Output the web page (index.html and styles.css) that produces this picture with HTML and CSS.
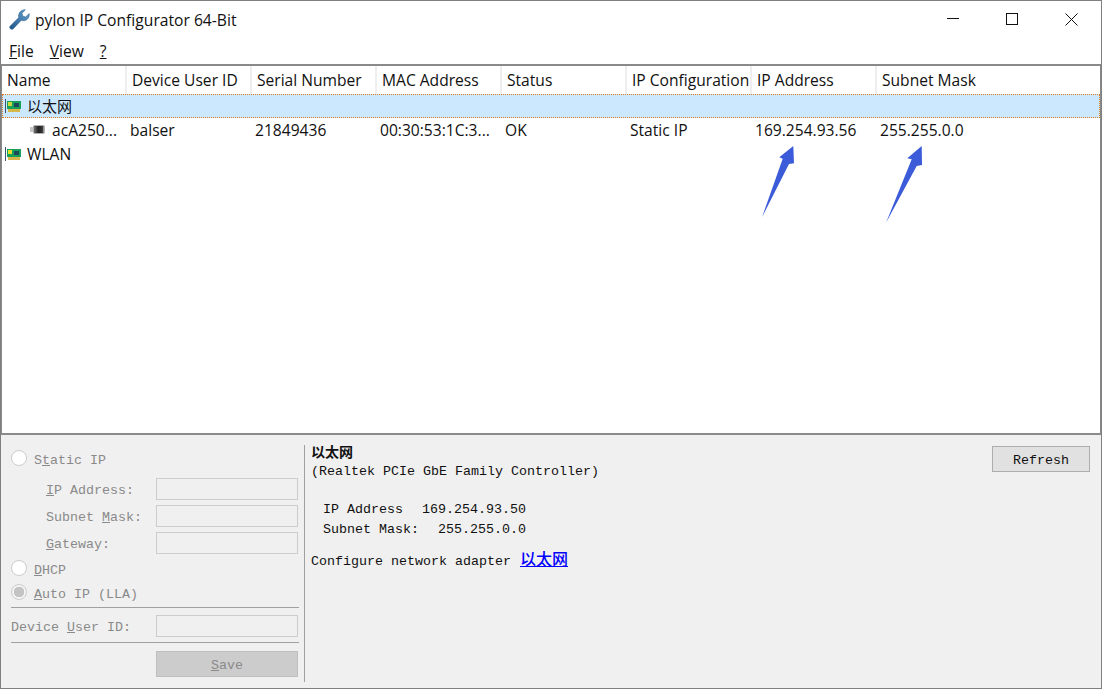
FILE: index.html
```html
<!DOCTYPE html>
<html lang="en">
<head>
<meta charset="utf-8">
<title>pylon IP Configurator 64-Bit</title>
<link rel="stylesheet" href="styles.css">
</head>
<body>
<div class="window">
  <header class="titlebar">
    <svg class="app-icon" viewBox="0 0 21 21" width="21" height="21"><defs><linearGradient id="wr" x1="0" y1="1" x2="1" y2="0"><stop offset="0" stop-color="#1f5488"/><stop offset="1" stop-color="#6aa3d0"/></linearGradient></defs><path d="M.8 17.500 9.800 8.600C8.800 4.800 11.500 .6 16.300 .8L13 4.300 13.800 7.200 16.700 8 20.200 4.600C20.700 9.800 16.300 13 12.300 11.300L4 20C2.300 21 .1 19.300 .8 17.500Z" fill="url(#wr)" stroke="#2a5f90" stroke-width=".6"/></svg>
    <span class="title">pylon IP Configurator 64-Bit</span>
    <div class="winbtns">
      <svg class="winbtn" width="46" height="13" viewBox="0 0 46 13"><path d="M17 5.500h12" stroke="#111" fill="none"/></svg>
      <svg class="winbtn" width="46" height="13" viewBox="0 0 46 13"><rect x="17.500" y=".5" width="11" height="11" stroke="#111" fill="none"/></svg>
      <svg class="winbtn" width="46" height="13" viewBox="0 0 46 13"><path d="M17.500 .5l12 12M29.500 .5l-12 12" stroke="#111" fill="none"/></svg>
    </div>
  </header>
  <nav class="menubar">
    <span><u>F</u>ile</span><span><u>V</u>iew</span><span><u>?</u></span>
  </nav>
  <section class="list">
    <div class="row head">
      <div>Name</div><div>Device User ID</div><div>Serial Number</div><div>MAC Address</div><div>Status</div><div>IP Configuration</div><div>IP Address</div><div>Subnet Mask</div>
    </div>
    <div class="row adapter selected">
      <div class="name">
        <svg class="nic" width="16" height="14" viewBox="0 0 16 14"><path d="M.5 0v14" stroke="#3a5670"/><rect x="2" y="2" width="14" height="8" fill="#16a05a"/><rect x="3" y="3" width="4" height="4" fill="#c9d83a"/><rect x="9" y="4" width="5" height="4" fill="#1c4a5a"/><path d="M3 10h12v3H3z" fill="#d8b84a"/></svg>
        <span class="cjk">以太网</span>
      </div>
    </div>
    <div class="row device">
      <div class="name">
        <svg class="cam" width="16" height="9" viewBox="0 0 16 9"><defs><linearGradient id="cb"><stop offset="0" stop-color="#777"/><stop offset=".45" stop-color="#222"/><stop offset=".8" stop-color="#333"/><stop offset="1" stop-color="#ddd"/></linearGradient></defs><path d="M0 2h3v5H0z" fill="#c4c4c4"/><rect x="3.500" y=".5" width="11" height="8" rx="1" fill="url(#cb)" stroke="#b0b0b0"/></svg>
        <span>acA250...</span>
      </div>
      <div>balser</div><div>21849436</div><div>00:30:53:1C:3...</div><div>OK</div><div>Static IP</div><div>169.254.93.56</div><div>255.255.0.0</div>
    </div>
    <div class="row adapter">
      <div class="name">
        <svg class="nic" width="16" height="14" viewBox="0 0 16 14"><path d="M.5 0v14" stroke="#3a5670"/><rect x="2" y="2" width="14" height="8" fill="#16a05a"/><rect x="3" y="3" width="4" height="4" fill="#e4e02a"/><rect x="9" y="4" width="5" height="4" fill="#1c4a5a"/><path d="M3 10h12v3H3z" fill="#d8b84a"/></svg>
        <span>WLAN</span>
      </div>
    </div>
  </section>
  <section class="panel">
    <form class="form">
      <label class="radio"><i class="dot"></i><span>S<u>t</u>atic IP</span></label>
      <div class="field indent first"><span><u>I</u>P Address:</span><i class="input"></i></div>
      <div class="field indent"><span>Subnet <u>M</u>ask:</span><i class="input"></i></div>
      <div class="field indent"><span><u>G</u>ateway:</span><i class="input"></i></div>
      <label class="radio dhcp"><i class="dot"></i><span><u>D</u>HCP</span></label>
      <label class="radio auto"><i class="dot on"></i><span><u>A</u>uto IP (LLA)</span></label>
      <hr class="rule">
      <div class="field user"><span>Device <u>U</u>ser ID:</span><i class="input"></i></div>
      <hr class="rule second">
      <div class="save"><u>S</u>ave</div>
    </form>
    <div class="info">
      <div class="info-text">
        <div class="cjk-bold">以太网</div>
        <div class="mono adapter-name">(Realtek PCIe GbE Family Controller)</div>
        <div class="mono ip">IP Address  <span class="value">169.254.93.50</span></div>
        <div class="mono mask">Subnet Mask:  <span class="value">255.255.0.0</span></div>
        <div class="mono conf">Configure network adapter <a href="#" class="cjk-link">以太网</a></div>
      </div>
      <div class="refresh">Refresh</div>
    </div>
  </section>
  <svg class="arrows" width="1102" height="689" viewBox="0 0 1102 689">
    <path d="M793.300 146 794 163.300 789 164 762 217.300 782.700 158.700 779.300 157.300Z" fill="#3b5bd8"/>
    <path d="M921.700 146 922 165 916.700 166 886 222.700 911.700 159.300 907.300 158.300Z" fill="#3b5bd8"/>
  </svg>
</div>
</body>
</html>
```
FILE: styles.css
```css
* { box-sizing: border-box; }
html, body { margin: 0; padding: 0; }
body { width: 1102px; height: 689px; overflow: hidden; background: #fff; font-family: "Open Sans", "Noto Sans CJK SC", sans-serif; font-size: 15.600px; color: #111; }
.window { position: relative; width: 1102px; height: 689px; border: 1px solid #7f7f7f; display: flex; flex-direction: column; background: #fff; }
.titlebar { height: 37px; display: flex; align-items: center; padding-left: 8px; flex: none; }
.app-icon { margin-right: 5px; }
.title { font-size: 15.650px; }
.winbtns { margin-left: auto; display: flex; gap: 13px; margin-right: 7px; }
.menubar { height: 26px; display: flex; gap: 16px; padding-left: 8px; flex: none; align-items: center; font-size: 15.600px; }
.list { height: 371px; flex: none; border-style: solid; border-width: 2px 1px 2px 1px; border-color: #8a8a8a; background: #fff; overflow: hidden; }
.row { display: grid; grid-template-columns: 125px 125px 125px 125px 125px 125px 125px 1fr; }
.row.head { height: 28px; align-items: center; }
.row.head > div { height: 28px; line-height: 28px; padding-left: 5px; border-right: 2px solid #eee; white-space: nowrap; overflow: hidden; }
.row.head > div:last-child { border-right: 0; }
.row.adapter, .row.device { height: 24px; align-items: center; }
.row.device > div { padding-left: 3px; white-space: nowrap; line-height: 22px; padding-bottom: 1px; }
.name { display: flex; align-items: center; gap: 6px; line-height: 22px; }
.row.adapter .name { padding-left: 3px; grid-column: 1 / -1; }
.row.device > .name { padding-left: 28px; gap: 6px; }
.selected { background: #cce8ff; outline: 1px dotted #e07b20; outline-offset: -1px; }
.cjk { font-family: "Noto Sans CJK SC", sans-serif; font-size: 15px; }
.panel { flex: 1; display: flex; background: #f0f0f0; font-family: "Liberation Mono", monospace; font-size: 13.333px; }
.form { width: 303px; flex: none; padding: 13px 5px 0 10px; color: #8a8a8a; }
.radio { display: flex; align-items: center; gap: 7px; height: 20px; }
.radio span { padding-top: 4px; }
.dot { width: 16px; height: 16px; border-radius: 50%; background: #fff; border: 1px solid #ccc; display: block; flex: none; }
.dot.on { background: radial-gradient(circle, #c4c4c4 0 5px, #f4f4f4 5.500px); }
.field { display: flex; align-items: center; justify-content: space-between; height: 22px; margin-top: 5px; }
.field span { padding-top: 2px; }
.field.indent { padding-left: 35px; }
.field.first { margin-top: 10px; }
.input { display: block; width: 142px; height: 22px; margin-right: 1px; border: 1px solid #ccc; background: #f0f0f0; }
.dhcp { margin-top: 4px; }
.auto { margin-top: 4px; }
.rule { border: 0; border-top: 1px solid #a0a0a0; margin: 5px 0 0; }
.user { margin-top: 7px; }
.rule.second { margin-top: 5px; }
.save { margin: 8px 0 0 145px; width: 142px; height: 26px; background: #cccccc; border: 1px solid #bfbfbf; text-align: center; line-height: 27px; }
.info { flex: 1; border-left: 1px solid #a0a0a0; margin: 10px 0 6px 0; padding: 0 11px 0 6px; display: flex; justify-content: space-between; align-items: flex-start; color: #111; }
.info-text { display: flex; flex-direction: column; }
.cjk-bold { font-family: "Noto Sans CJK SC", sans-serif; font-weight: 700; font-size: 14px; line-height: 13px; }
.mono { white-space: pre; line-height: 17px; }
.adapter-name { margin-top: 5px; }
.ip { margin: 21px 0 0 12px; }
.mask { margin: 3px 0 0 12px; }
.value { margin-left: 3px; }
.conf { margin-top: 12px; }
.cjk-link { font-family: "Noto Sans CJK SC", sans-serif; font-size: 16px; color: #0000ff; font-weight: 500; margin-left: 1px; }
.refresh { width: 98px; height: 26px; margin-top: 1px; background: #e1e1e1; border: 1px solid #adadad; text-align: center; line-height: 27px; }
.arrows { position: absolute; left: -1px; top: -1px; pointer-events: none; }
```
